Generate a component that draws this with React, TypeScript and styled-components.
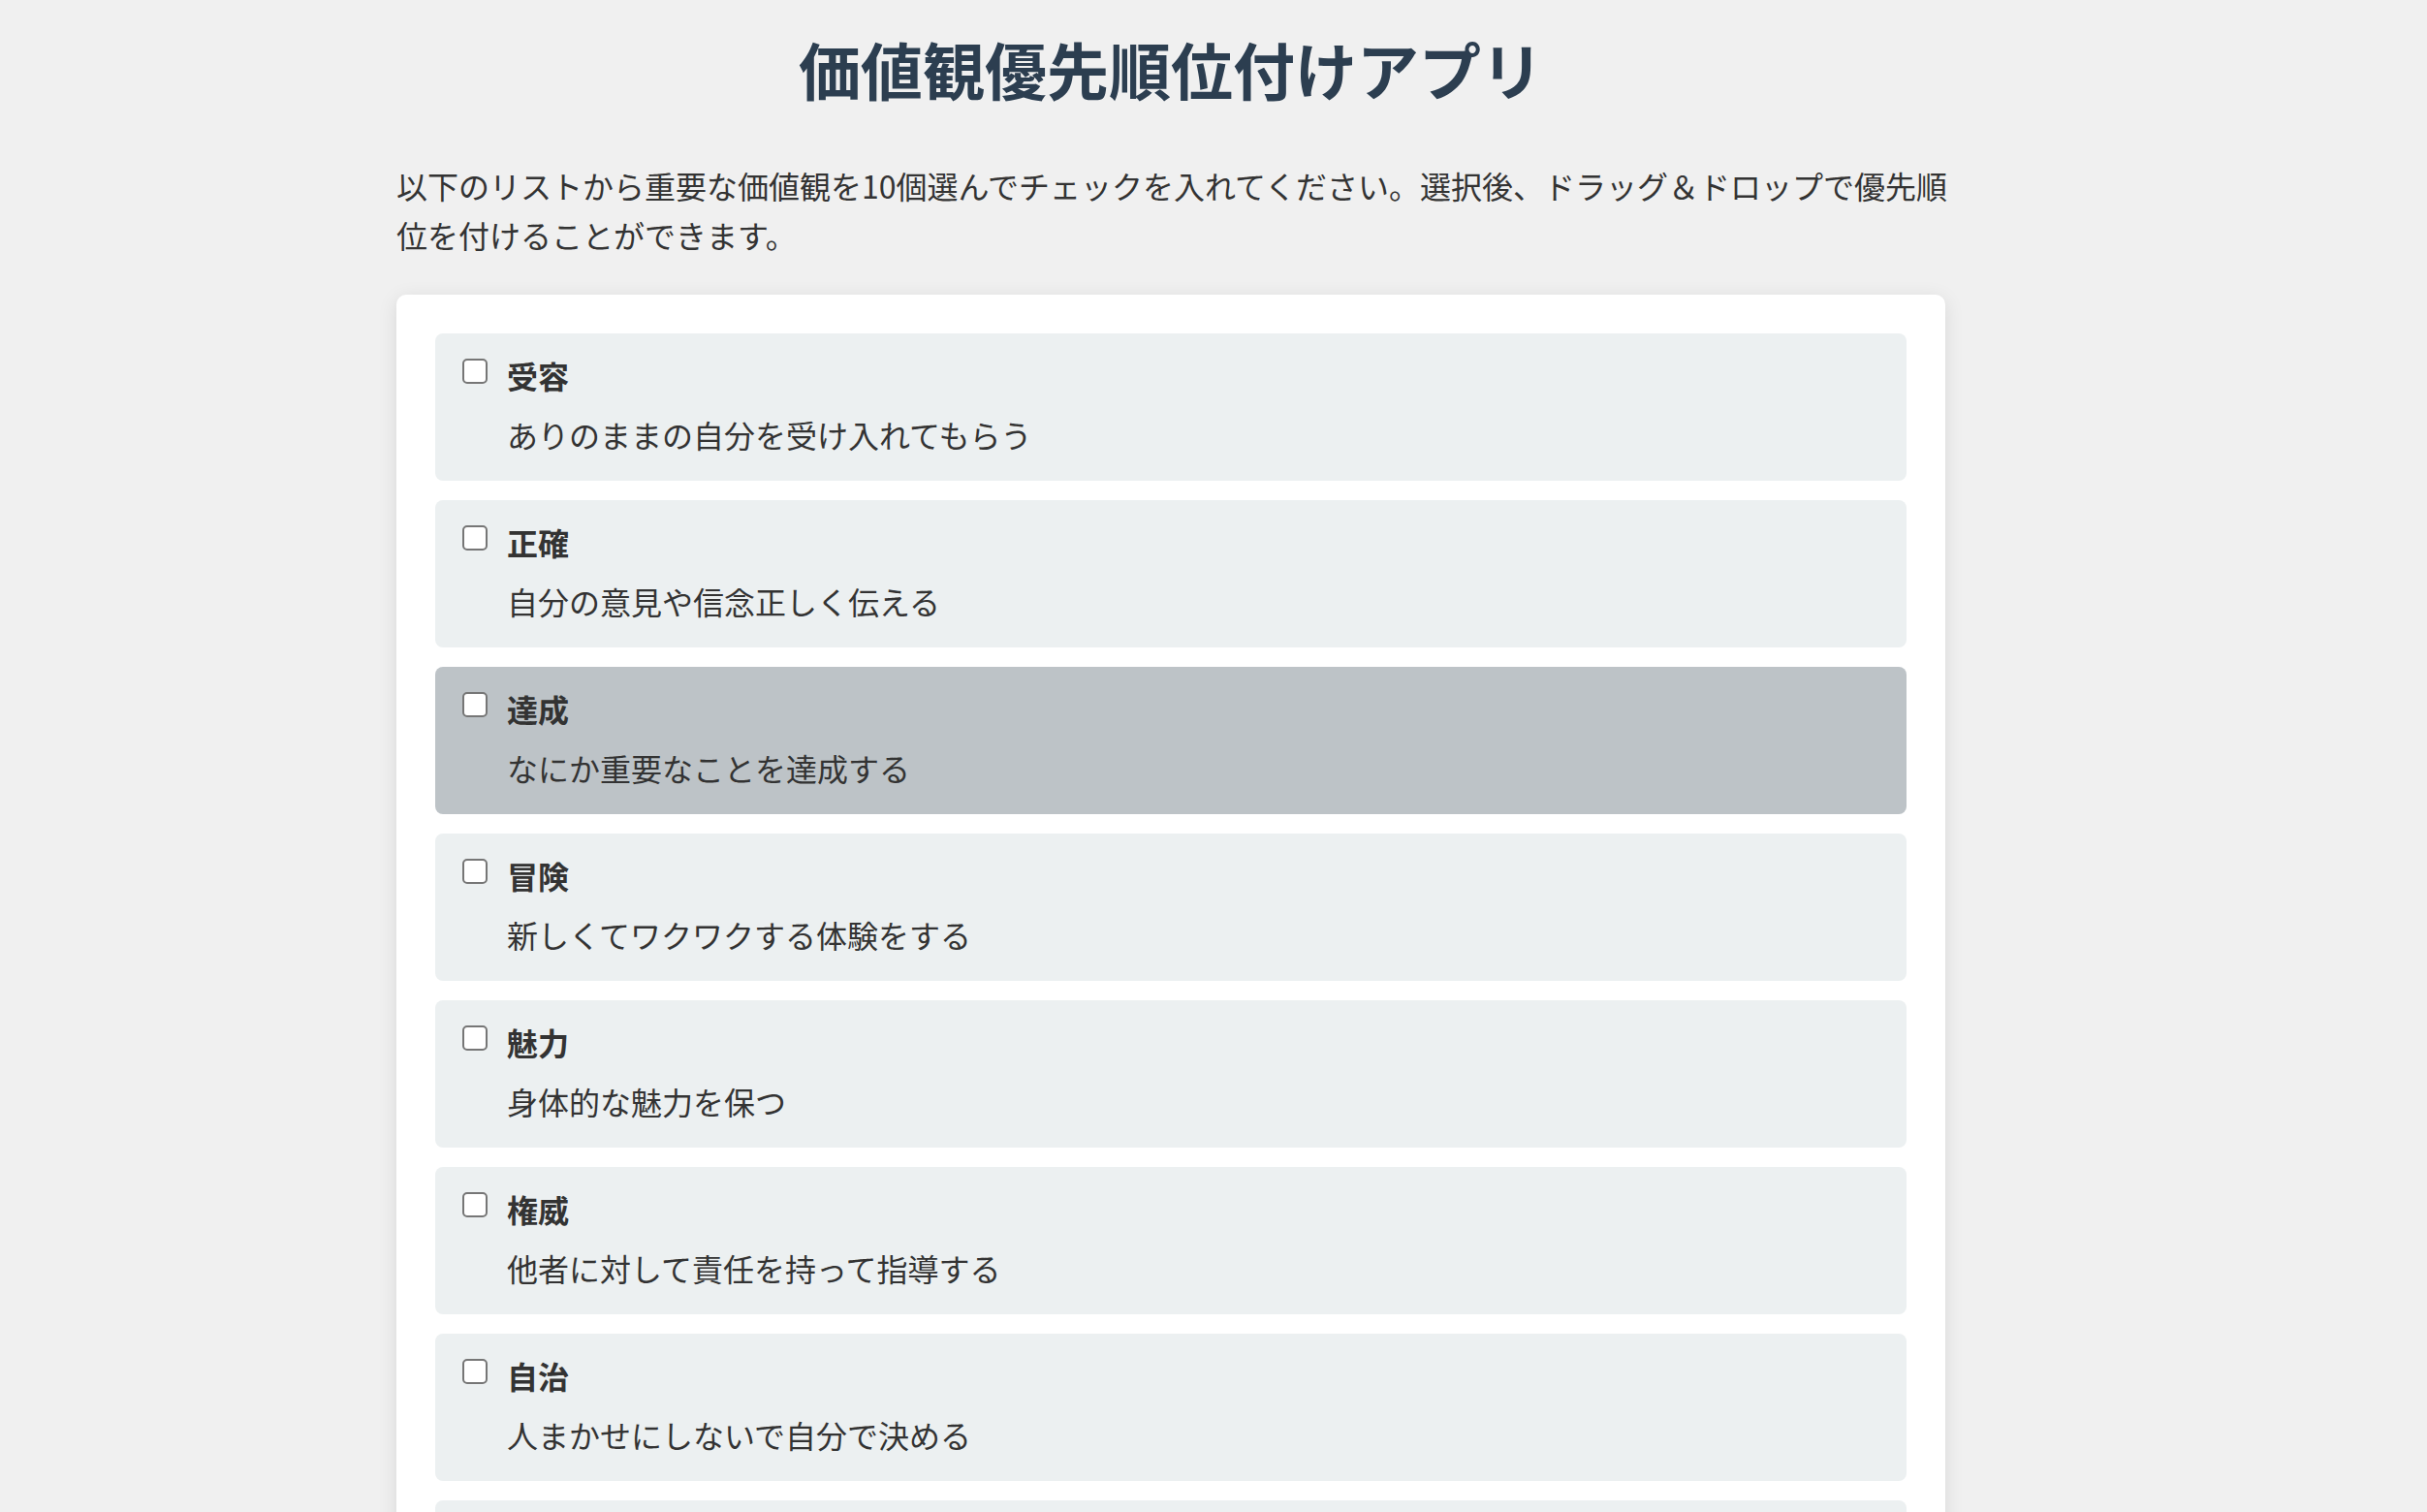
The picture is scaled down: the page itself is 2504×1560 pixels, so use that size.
import React from "react";
import styled, { createGlobalStyle } from "styled-components";

const GlobalStyle = createGlobalStyle`
  html, body {
    margin: 0;
    padding: 0;
    background: #f0f0f0;
  }
  body {
    font-family: "Noto Sans CJK JP", "Noto Sans", sans-serif;
    color: #333333;
  }
  * { box-sizing: border-box; }
`;

const Page = styled.div`
  width: 1598px;
  margin: 0 0 0 409px;
  padding-top: 32px;
`;

const Title = styled.h1`
  margin: 0;
  font-size: 64px;
  line-height: 77px;
  font-weight: 700;
  color: #2c3e50;
  text-align: center;
`;

const Intro = styled.p`
  margin: 57px -12px 0 0;
  font-size: 32px;
  line-height: 51px;
  color: #333333;
`;

const Card = styled.div`
  margin-top: 36px;
  background: #ffffff;
  border-radius: 10px;
  box-shadow: 0 4px 20px rgba(0, 0, 0, 0.1);
  padding: 40px;
  display: flex;
  flex-direction: column;
  gap: 20px;
`;

const Item = styled.div<{ $active?: boolean }>`
  display: flex;
  align-items: flex-start;
  padding: 18px 20px 22px 20px;
  border-radius: 8px;
  background: ${(p) => (p.$active ? "#bdc3c7" : "#ecf0f1")};
`;

const Check = styled.input.attrs({ type: "checkbox" })`
  appearance: none;
  -webkit-appearance: none;
  flex: none;
  width: 26px;
  height: 26px;
  margin: 8px 20px 0 8px;
  border: 2px solid #767676;
  border-radius: 5px;
  background: #ffffff;
`;

const Content = styled.div`
  display: flex;
  flex-direction: column;
  gap: 10px;
`;

const Name = styled.div`
  font-size: 32px;
  line-height: 51px;
  font-weight: 700;
  color: #333333;
`;

const Desc = styled.div`
  font-size: 32px;
  line-height: 51px;
  color: #333333;
`;

const values = [
  { name: "受容", desc: "ありのままの自分を受け入れてもらう" },
  { name: "正確", desc: "自分の意見や信念正しく伝える" },
  { name: "達成", desc: "なにか重要なことを達成する" },
  { name: "冒険", desc: "新しくてワクワクする体験をする" },
  { name: "魅力", desc: "身体的な魅力を保つ" },
  { name: "権威", desc: "他者に対して責任を持って指導する" },
  { name: "自治", desc: "人まかせにしないで自分で決める" },
  { name: "美", desc: "身の回りの美しいものを味わう" },
  { name: "思いやり", desc: "他人に親切にし、思いやりを持つ" },
  { name: "挑戦", desc: "難しい仕事や問題に取り組む" },
];

export default function App() {
  return (
    <>
      <GlobalStyle />
      <Page>
        <Title>価値観優先順位付けアプリ</Title>
        <Intro>
          以下のリストから重要な価値観を10個選んでチェックを入れてください。選択後、ドラッグ＆ドロップで優先順位を付けることができます。
        </Intro>
        <Card>
          {values.map((v, i) => (
            <Item key={v.name} $active={i === 2}>
              <Check />
              <Content>
                <Name>{v.name}</Name>
                <Desc>{v.desc}</Desc>
              </Content>
            </Item>
          ))}
        </Card>
      </Page>
    </>
  );
}
